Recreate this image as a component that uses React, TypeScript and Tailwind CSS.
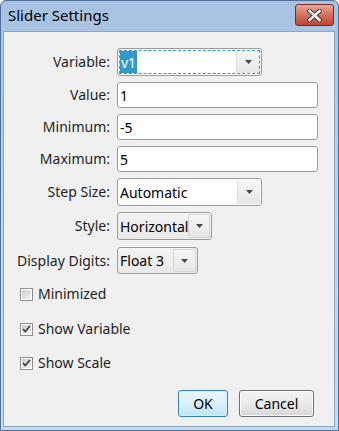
import React from 'react';

// Windows 7 styled "Slider Settings" dialog

function Arrow() {
  return (
    <svg width="7" height="4" viewBox="0 0 7 4">
      <path d="M0 0h7L3.5 4z" fill="#454545" />
    </svg>
  );
}

function DropButton({ bordered }: { bordered?: boolean }) {
  return (
    <div
      className={`w-[23px] h-full flex items-center justify-center bg-gradient-to-b from-[#f6f6f6] to-[#e6e6e6] ${
        bordered ? 'border-l border-[#dcdcdc]' : 'rounded-[2px] border border-[#d6d6d6]'
      }`}
    >
      <Arrow />
    </div>
  );
}

function Row({ label, children, className = '' }: { label: string; children: React.ReactNode; className?: string }) {
  return (
    <div className={`flex items-center gap-[7px] ${className}`}>
      <div className="w-[106px] text-right text-[14px] text-[#1e1e1e] leading-none">{label}</div>
      {children}
    </div>
  );
}

function TextBox({ value }: { value: string }) {
  return (
    <div className="w-[201px] h-[26px] rounded-[3px] border border-[#9c9c9c] bg-white flex items-center pl-[2px] text-[14px] text-black">
      {value}
    </div>
  );
}

function CheckBox({ label, checked }: { label: string; checked: boolean }) {
  return (
    <div className="flex items-center gap-[5px] pl-[16px]">
      <div className="w-[13px] h-[13px] border border-[#8e8f8f] bg-white p-[1px]">
        <div className="w-full h-full bg-gradient-to-br from-[#cbcbcb] to-[#f4f4f4] flex items-center justify-center">
          {checked && (
            <svg width="9" height="8" viewBox="0 0 9 8">
              <path d="M1 4l2.3 2.5L8 1" stroke="#3c3c3c" strokeWidth="1.7" fill="none" />
            </svg>
          )}
        </div>
      </div>
      <span className="text-[14px] text-[#1e1e1e] leading-none">{label}</span>
    </div>
  );
}

export default function App() {
  return (
    <div className="w-[339px] h-[431px] bg-white font-['Noto_Sans',sans-serif]">
      <div className="w-full h-full rounded-t-[6px] border border-[#52709a] bg-gradient-to-b from-[#a7c2e2] via-[#bcd3ec] to-[#c5dbf1] flex flex-col pl-[2px] pr-[3px] pb-[3px]">
        {/* Title bar */}
        <div className="h-[30px] flex items-start justify-between pl-[5px] pr-[1px]">
          <span className="mt-[5px] text-[15px] text-black leading-[18px]">Slider Settings</span>
          <div className="mt-[3px] w-[39px] h-[22px] rounded-[3px] border border-[#7a2a22] bg-gradient-to-b from-[#e8a898] via-[#d2705e] to-[#c0442f] flex items-center justify-center">
            <svg width="15" height="13" viewBox="0 0 15 13">
              <path d="M2.5 2l10 9M12.5 2l-10 9" stroke="#4a3030" strokeWidth="4.5" strokeLinecap="square" />
              <path d="M2.5 2l10 9M12.5 2l-10 9" stroke="#ffffff" strokeWidth="2.6" strokeLinecap="square" />
            </svg>
          </div>
        </div>

        {/* Content */}
        <div className="flex-1 border border-[#8fa4bf] bg-[#f0f0f0] flex flex-col pt-[16px]">
          <Row label="Variable:">
            <div className="w-[145px] h-[28px] rounded-[3px] border border-[#9c9c9c] bg-white p-[1px]">
              <div className="w-full h-full border border-dashed border-[#3b95c4] flex">
                <div className="flex-1 flex items-stretch">
                  <span className="bg-[#3399c8] text-white text-[14px] flex items-center px-[1px]">v1</span>
                </div>
                <DropButton bordered />
              </div>
            </div>
          </Row>
          <Row label="Value:" className="mt-[6px]">
            <TextBox value="1" />
          </Row>
          <Row label="Minimum:" className="mt-[6px]">
            <TextBox value="-5" />
          </Row>
          <Row label="Maximum:" className="mt-[6px]">
            <TextBox value="5" />
          </Row>
          <Row label="Step Size:" className="mt-[6px]">
            <div className="w-[145px] h-[28px] rounded-[3px] border border-[#9c9c9c] bg-white flex p-[1px]">
              <div className="flex-1 flex items-center pl-[1px] text-[14px] text-black">Automatic</div>
              <DropButton bordered />
            </div>
          </Row>
          <Row label="Style:" className="mt-[6px]">
            <div className="w-[95px] h-[28px] rounded-[3px] border border-[#9c9c9c] bg-gradient-to-b from-[#f4f4f4] to-[#e8e8e8] flex p-[1px]">
              <div className="flex-1 flex items-center pl-[1px] text-[14px] text-black">Horizontal</div>
              <DropButton />
            </div>
          </Row>
          <Row label="Display Digits:" className="mt-[7px]">
            <div className="w-[81px] h-[27px] rounded-[3px] border border-[#9c9c9c] bg-gradient-to-b from-[#f4f4f4] to-[#e8e8e8] flex p-[1px]">
              <div className="flex-1 flex items-center pl-[1px] text-[14px] text-black">Float 3</div>
              <DropButton />
            </div>
          </Row>

          <div className="mt-[13px]">
            <CheckBox label="Minimized" checked={false} />
          </div>
          <div className="mt-[21px]">
            <CheckBox label="Show Variable" checked />
          </div>
          <div className="mt-[20px]">
            <CheckBox label="Show Scale" checked />
          </div>

          <div className="mt-[20px] flex justify-end gap-[11px] pr-[20px]">
            <button className="w-[50px] h-[27px] rounded-[3px] border border-[#3c7fb1] bg-gradient-to-b from-[#eaf6fd] via-[#d9f0fc] to-[#bee6fd] text-[14px] text-black shadow-[inset_0_0_0_1px_#d8eefa]">
              OK
            </button>
            <button className="w-[75px] h-[27px] rounded-[3px] border border-[#707070] bg-gradient-to-b from-[#f2f2f2] via-[#ebebeb] to-[#d6d6d6] text-[14px] text-black shadow-[inset_0_0_0_1px_#fcfcfc]">
              Cancel
            </button>
          </div>
        </div>
      </div>
    </div>
  );
}
